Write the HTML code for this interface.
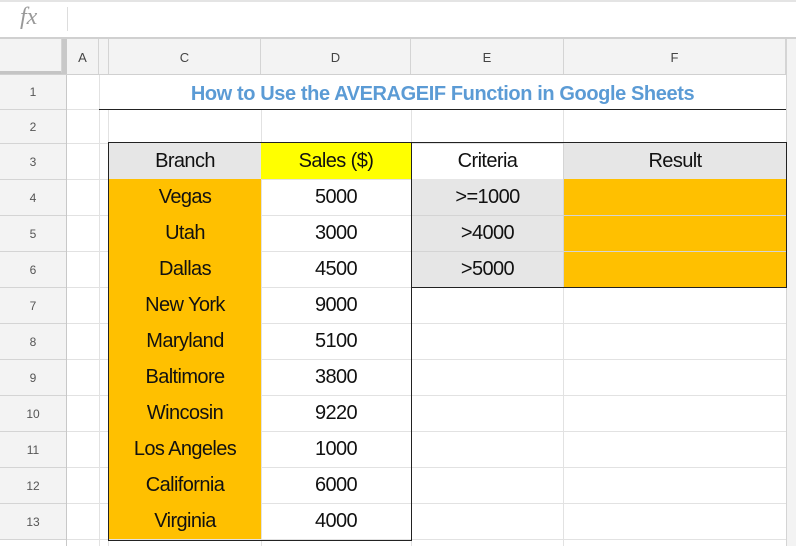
<!DOCTYPE html>
<html><head><style>
*{margin:0;padding:0;box-sizing:border-box}
body{width:796px;height:546px;overflow:hidden;background:#fff;font-family:"Liberation Sans",sans-serif;position:relative}
.a{position:absolute}
.hl{position:absolute;height:1px;background:#e2e2e2}
.vl{position:absolute;width:1px;background:#e2e2e2}
.rh{position:absolute;left:0;width:66px;background:#f3f3f3;color:#555;font-size:12px;text-align:center;border-bottom:1px solid #d4d4d4}
.ch{position:absolute;top:39px;height:35px;line-height:38px;background:#f3f3f3;color:#444;font-size:13px;text-align:center;border-right:1px solid #d4d4d4}
.c{position:absolute;height:36px;line-height:37px;text-align:center;font-size:20px;color:#111;letter-spacing:-0.6px}
</style></head><body>
<div class="a" style="left:0;top:0;width:796px;height:2px;background:#e4e4e4"></div>
<div class="a" style="left:20px;top:4px;font-family:'Liberation Serif',serif;font-style:italic;font-size:24px;color:#999">fx</div>
<div class="a" style="left:67px;top:7px;width:1px;height:24px;background:#ddd"></div>
<div class="a" style="left:0;top:37px;width:796px;height:2px;background:#d0d0d0"></div>
<div class="ch" style="left:0;width:62px;border-bottom:3px solid #c4c4c4"></div>
<div class="a" style="left:62px;top:39px;width:5px;height:35px;background:#c8c8c8"></div>
<div class="ch" style="left:67px;width:32px">A</div>
<div class="ch" style="left:99px;width:10px"></div>
<div class="ch" style="left:109px;width:152px">C</div>
<div class="ch" style="left:261px;width:150px">D</div>
<div class="ch" style="left:411px;width:153px">E</div>
<div class="ch" style="left:564px;width:222px">F</div>
<div class="a" style="left:0;top:74px;width:796px;height:1px;background:#d0d0d0"></div>
<div class="a" style="left:786px;top:39px;width:10px;height:507px;background:#f3f3f3;border-left:1px solid #d4d4d4"></div>
<div class="rh" style="top:75px;height:35px;line-height:35px">1</div>
<div class="rh" style="top:110px;height:34px;line-height:34px">2</div>
<div class="rh" style="top:144px;height:36px;line-height:36px">3</div>
<div class="rh" style="top:180px;height:36px;line-height:36px">4</div>
<div class="rh" style="top:216px;height:36px;line-height:36px">5</div>
<div class="rh" style="top:252px;height:36px;line-height:36px">6</div>
<div class="rh" style="top:288px;height:36px;line-height:36px">7</div>
<div class="rh" style="top:324px;height:36px;line-height:36px">8</div>
<div class="rh" style="top:360px;height:36px;line-height:36px">9</div>
<div class="rh" style="top:396px;height:36px;line-height:36px">10</div>
<div class="rh" style="top:432px;height:36px;line-height:36px">11</div>
<div class="rh" style="top:468px;height:36px;line-height:36px">12</div>
<div class="rh" style="top:504px;height:36px;line-height:36px">13</div>
<div class="a" style="left:66px;top:75px;width:1px;height:471px;background:#c8c8c8"></div>
<div class="vl" style="left:99px;top:75px;height:471px"></div>
<div class="vl" style="left:108px;top:110px;height:436px"></div>
<div class="vl" style="left:261px;top:110px;height:436px"></div>
<div class="vl" style="left:411px;top:110px;height:436px"></div>
<div class="vl" style="left:563px;top:110px;height:436px"></div>
<div class="hl" style="left:67px;top:143px;width:719px"></div>
<div class="hl" style="left:67px;top:179px;width:719px"></div>
<div class="hl" style="left:67px;top:215px;width:719px"></div>
<div class="hl" style="left:67px;top:251px;width:719px"></div>
<div class="hl" style="left:67px;top:287px;width:719px"></div>
<div class="hl" style="left:67px;top:323px;width:719px"></div>
<div class="hl" style="left:67px;top:359px;width:719px"></div>
<div class="hl" style="left:67px;top:395px;width:719px"></div>
<div class="hl" style="left:67px;top:431px;width:719px"></div>
<div class="hl" style="left:67px;top:467px;width:719px"></div>
<div class="hl" style="left:67px;top:503px;width:719px"></div>
<div class="hl" style="left:67px;top:539px;width:719px"></div>
<div class="hl" style="left:67px;top:109px;width:32px"></div>
<div class="a" style="left:99px;top:75px;width:687px;height:35px;line-height:38px;text-align:center;color:#5b9bd5;font-weight:bold;font-size:20px;border-bottom:1.5px solid #222;letter-spacing:-0.4px">How to Use the AVERAGEIF Function in Google Sheets</div>
<div class="c" style="left:109px;top:143px;width:152px;background:#e6e6e6">Branch</div>
<div class="c" style="left:261px;top:143px;width:150px;background:#ffff00">Sales ($)</div>
<div class="c" style="left:109px;top:179px;width:152px;background:#ffc000">Vegas</div>
<div class="c" style="left:109px;top:215px;width:152px;background:#ffc000">Utah</div>
<div class="c" style="left:109px;top:251px;width:152px;background:#ffc000">Dallas</div>
<div class="c" style="left:109px;top:287px;width:152px;background:#ffc000">New York</div>
<div class="c" style="left:109px;top:323px;width:152px;background:#ffc000">Maryland</div>
<div class="c" style="left:109px;top:359px;width:152px;background:#ffc000">Baltimore</div>
<div class="c" style="left:109px;top:395px;width:152px;background:#ffc000">Wincosin</div>
<div class="c" style="left:109px;top:431px;width:152px;background:#ffc000">Los Angeles</div>
<div class="c" style="left:109px;top:467px;width:152px;background:#ffc000">California</div>
<div class="c" style="left:109px;top:503px;width:152px;background:#ffc000">Virginia</div>
<div class="c" style="left:261px;top:179px;width:150px">5000</div>
<div class="c" style="left:261px;top:215px;width:150px">3000</div>
<div class="c" style="left:261px;top:251px;width:150px">4500</div>
<div class="c" style="left:261px;top:287px;width:150px">9000</div>
<div class="c" style="left:261px;top:323px;width:150px">5100</div>
<div class="c" style="left:261px;top:359px;width:150px">3800</div>
<div class="c" style="left:261px;top:395px;width:150px">9220</div>
<div class="c" style="left:261px;top:431px;width:150px">1000</div>
<div class="c" style="left:261px;top:467px;width:150px">6000</div>
<div class="c" style="left:261px;top:503px;width:150px">4000</div>
<div class="hl" style="left:261px;top:215px;width:150px"></div>
<div class="hl" style="left:261px;top:251px;width:150px"></div>
<div class="hl" style="left:261px;top:287px;width:150px"></div>
<div class="hl" style="left:261px;top:323px;width:150px"></div>
<div class="hl" style="left:261px;top:359px;width:150px"></div>
<div class="hl" style="left:261px;top:395px;width:150px"></div>
<div class="hl" style="left:261px;top:431px;width:150px"></div>
<div class="hl" style="left:261px;top:467px;width:150px"></div>
<div class="hl" style="left:261px;top:503px;width:150px"></div>
<div class="a" style="left:108px;top:142px;width:304px;height:399px;border:1.5px solid #222"></div>
<div class="c" style="left:411px;top:143px;width:153px">Criteria</div>
<div class="c" style="left:564px;top:143px;width:222px;background:#e6e6e6">Result</div>
<div class="c" style="left:411px;top:179px;width:153px;background:#e6e6e6">&gt;=1000</div>
<div class="c" style="left:411px;top:215px;width:153px;background:#e6e6e6">&gt;4000</div>
<div class="c" style="left:411px;top:251px;width:153px;background:#e6e6e6">&gt;5000</div>
<div class="a" style="left:564px;top:179px;width:222px;height:108px;background:#ffc000"></div>
<div class="hl" style="left:411px;top:215px;width:375px;background:#d4d4d4"></div>
<div class="hl" style="left:411px;top:251px;width:375px;background:#d4d4d4"></div>
<div class="vl" style="left:563px;top:143px;height:144px;background:#d4d4d4"></div>
<div class="a" style="left:411px;top:142px;width:376px;height:146px;border:1.5px solid #222"></div>
</body></html>
